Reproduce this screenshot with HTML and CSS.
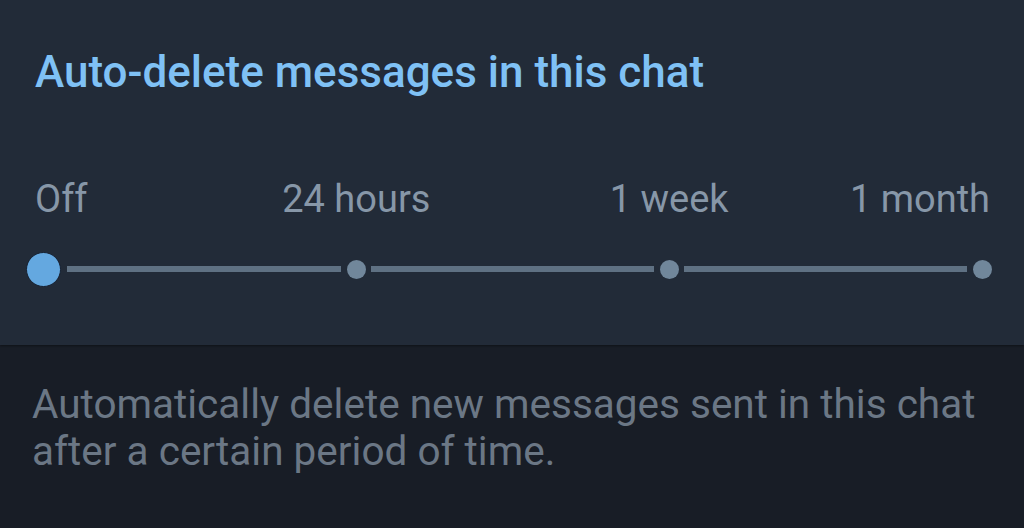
FILE: index.html
```html
<!DOCTYPE html>
<html>
<head>
	<title>Auto-delete</title>
	<link rel="stylesheet" href="styles.css">
</head>
<body>
	<div class="panel">
		<h1 class="title">Auto-delete messages in this chat</h1>
		<div class="slider">
			<span class="label first">Off</span>
			<span class="label second">24 hours</span>
			<span class="label third">1 week</span>
			<span class="label last">1 month</span>

			<span class="knob"></span>
			<span class="segment first"></span>
			<span class="dot"></span>
			<span class="segment"></span>
			<span class="dot"></span>
			<span class="segment"></span>
			<span class="dot"></span>
		</div>
	</div>
	<div class="info">
		<p>Automatically delete new messages sent in this chat after a certain period of time.</p>
	</div>
</body>
</html>
```

FILE: styles.css
```css
body {
	margin: 0;
	font-family: Roboto, "Noto Sans", sans-serif;
	background-color: #181d26;
	height: 528px;
	overflow: hidden;
}
.panel {
	background-color: #222b38;
	padding: 46px 0 58.5px 0;
	box-shadow: 0 1px 2px rgba(0, 0, 0, 0.4);
}
.title {
	margin: 0 0 0 35px;
	font-size: 44px;
	line-height: 52px;
	font-weight: 500;
	color: #7fc1f5;
}
.slider {
	display: grid;
	grid-template-columns: 19px 1fr 19px 1fr 19px 1fr 19px;
	grid-template-rows: 46px 35px;
	column-gap: 5.5px;
	row-gap: 29.5px;
	margin: 78px 32.5px 0 34px;
}
.label {
	grid-row: 1;
	font-size: 38px;
	line-height: 46px;
	color: #8797a8;
	white-space: nowrap;
}
.label.first {
	grid-column: 1 / 3;
	margin-left: 1px;
}
.label.second {
	grid-column: 2 / 5;
	text-align: center;
}
.label.third {
	grid-column: 4 / 7;
	text-align: center;
}
.label.last {
	grid-column: 6 / 8;
	text-align: right;
	margin-right: 1.5px;
}
.knob, .segment, .dot {
	grid-row: 2;
	align-self: center;
}
.knob {
	grid-column: 1;
	justify-self: center;
	width: 33px;
	height: 33px;
	margin: 0 -8px;
	border-radius: 50%;
	background-color: #64a8e0;
	border: 1px solid #162030;
}
.segment {
	height: 6px;
	background-color: #5f7183;
}
.segment.first {
	margin-left: 8px;
}
.dot {
	width: 19px;
	height: 19px;
	border-radius: 50%;
	background-color: #71879b;
}
.info {
	padding: 35.5px 20px 0 32px;
}
.info p {
	margin: 0;
	font-size: 40.5px;
	line-height: 47px;
	color: #6b7785;
}
```
